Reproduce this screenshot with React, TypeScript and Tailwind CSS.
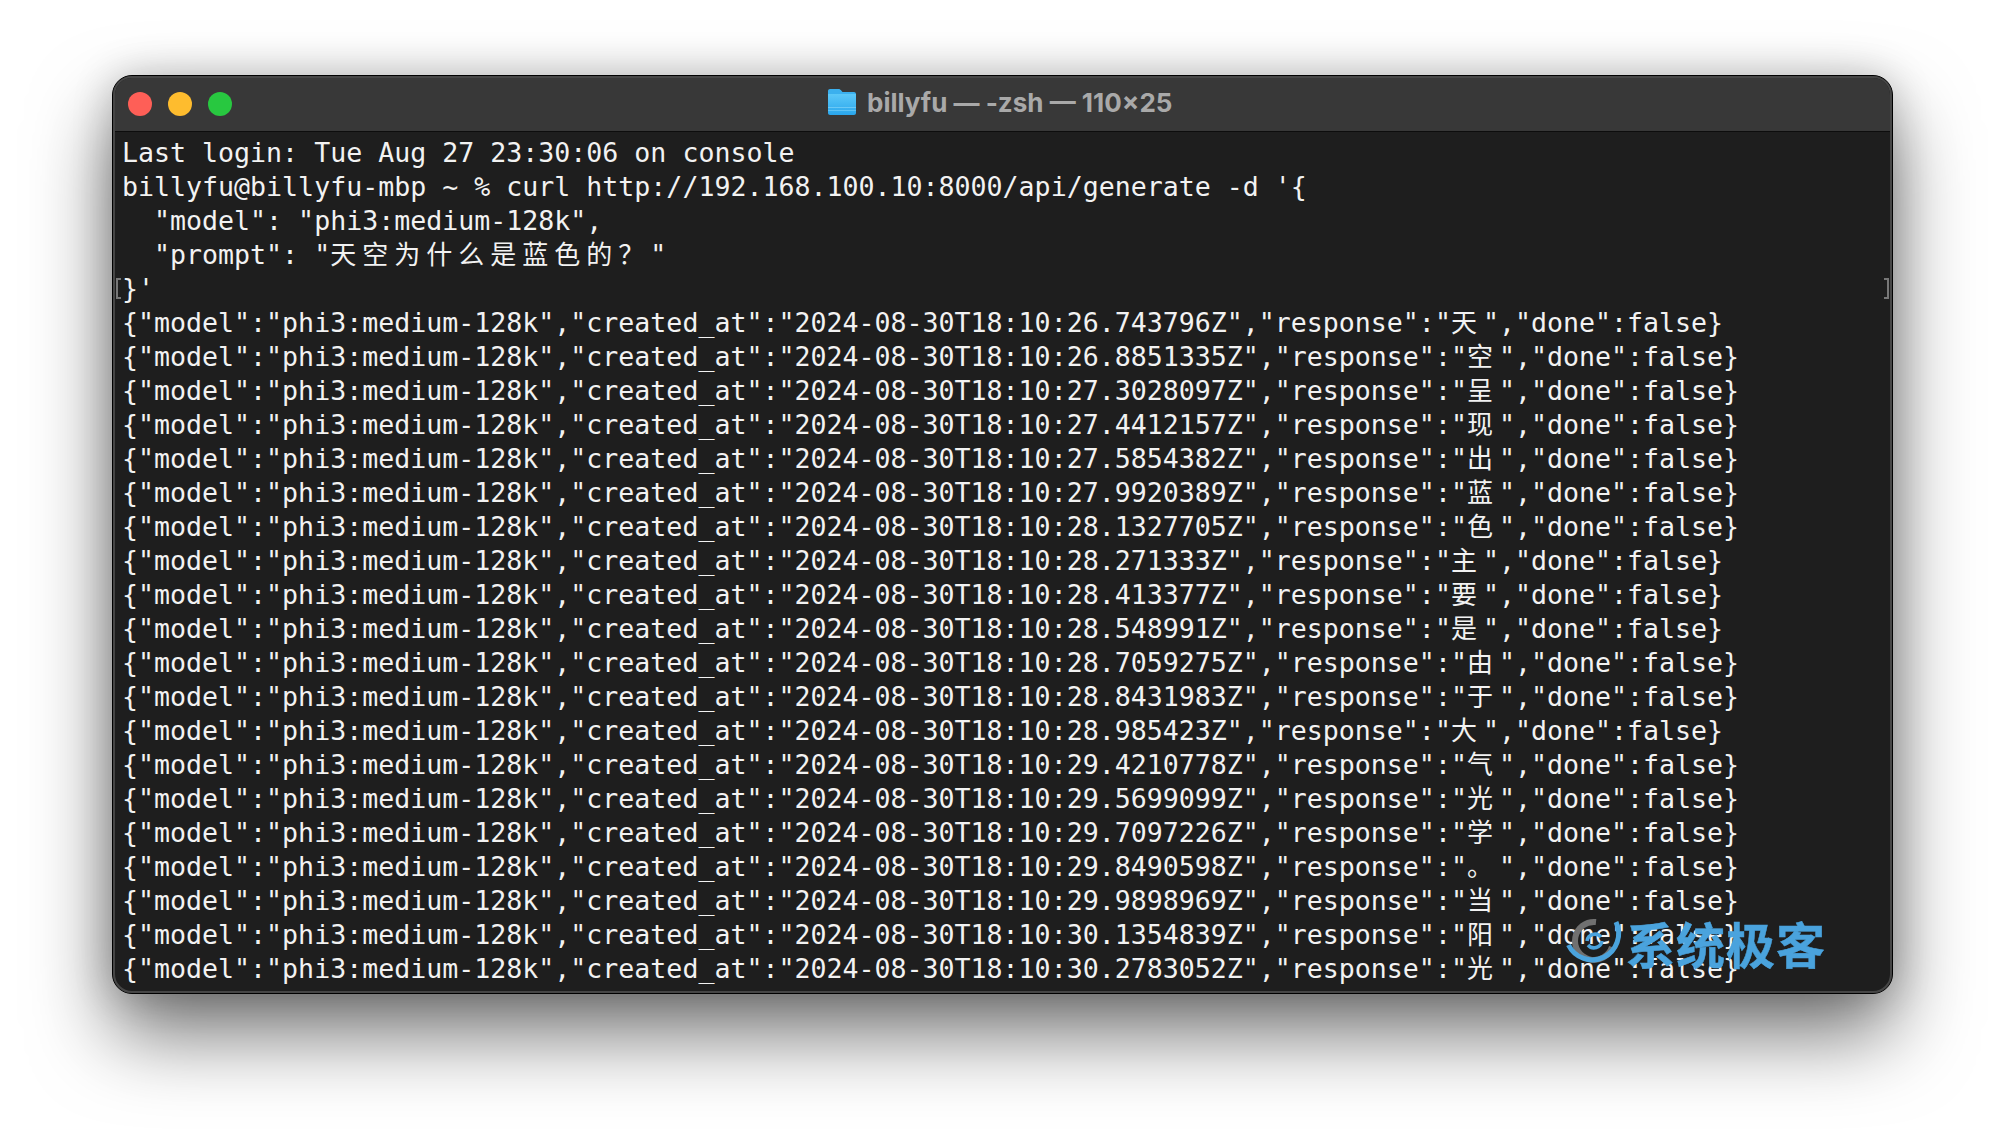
import React from 'react';

const mono = 'font-["DejaVu_Sans_Mono","Noto_Sans_CJK_SC",monospace]';

const responses: [string, string][] = [
    ['26.743796Z', '天'],
    ['26.8851335Z', '空'],
    ['27.3028097Z', '呈'],
    ['27.4412157Z', '现'],
    ['27.5854382Z', '出'],
    ['27.9920389Z', '蓝'],
    ['28.1327705Z', '色'],
    ['28.271333Z', '主'],
    ['28.413377Z', '要'],
    ['28.548991Z', '是'],
    ['28.7059275Z', '由'],
    ['28.8431983Z', '于'],
    ['28.985423Z', '大'],
    ['29.4210778Z', '气'],
    ['29.5699099Z', '光'],
    ['29.7097226Z', '学'],
    ['29.8490598Z', '。'],
    ['29.9898969Z', '当'],
    ['30.1354839Z', '阳'],
    ['30.2783052Z', '光'],
];

// CJK glyphs take two terminal cells
const Line = ({ text }: { text: string }) => (
    <div className="h-[34px] whitespace-pre leading-[34px]">
        {text.split(/([\u3000-\u9fff\uff00-\uffef])/).map((part, i) =>
            i % 2 === 1 ? (
                <span key={i} className="inline-block w-[32px] text-left text-[26px] leading-none font-['Noto_Sans_CJK_SC',sans-serif]">
                    {part}
                </span>
            ) : (
                <span key={i}>{part}</span>
            )
        )}
    </div>
);

const FolderIcon = () => (
    <svg width="28" height="26" viewBox="0 0 28 26">
        <defs>
            <linearGradient id="folderFront" x1="0" y1="0" x2="0" y2="1">
                <stop offset="0" stopColor="#5cc8f8" />
                <stop offset="1" stopColor="#2aa6ec" />
            </linearGradient>
        </defs>
        <path d="M2 0h8.500c1 0 1.600.4 2.300 1.100L14.500 3H26c1.100 0 2 .9 2 2v3H0V2C0 .9.9 0 2 0z" fill="#3bb0ee" />
        <path d="M0 5h28v19c0 1.100-.9 2-2 2H2c-1.100 0-2-.9-2-2z" fill="url(#folderFront)" />
        <rect y="18" width="28" height="1" fill="#8ad8fa" opacity="0.6" />
        <rect y="21" width="28" height="1" fill="#8ad8fa" opacity="0.5" />
    </svg>
);

const Watermark = () => (
    <div className="absolute left-[1550px] top-[905px] flex items-center text-[#4aa3dd]">
        <svg width="76" height="70" viewBox="0 0 76 70">
            <path d="M46 17A19 19 0 1 0 62 42" fill="none" stroke="#707070" strokeWidth="6" />
            <path d="M66 17A26 26 0 1 1 18.500 40" fill="none" stroke="#4aa3dd" strokeWidth="5" />
            <path d="M37 36a8 8 0 0 1 14-4M52 36a8 8 0 0 1-14 4" fill="none" stroke="#4aa3dd" strokeWidth="3.500" />
        </svg>
        <span className="mt-[4px] text-[49px] font-bold leading-none tracking-[1px] [-webkit-text-stroke:0.5px_#4aa3dd] font-['Noto_Sans_CJK_SC',sans-serif]">系统极客</span>
    </div>
);

export default function App() {
    return (
        <div className="relative h-[1142px] w-[2004px] overflow-hidden bg-white pl-[112px] pt-[75px]">
            <div className="h-[919px] w-[1781px] rounded-[20px] border border-black bg-[#1e1e1e] shadow-[0_40px_80px_rgba(0,0,0,0.55),0_0_40px_rgba(0,0,0,0.2)]">
                <div className="relative h-full overflow-hidden rounded-[19px] border-2 border-[#464646]">
                    <div className="flex h-[54px] items-center border-b border-[#0d0d0d] bg-[#383838] pb-[1px] pl-[13px]">
                        <div className="flex gap-[16px]">
                            <div className="h-[24px] w-[24px] rounded-full bg-[#fe5f57]" />
                            <div className="h-[24px] w-[24px] rounded-full bg-[#febc2e]" />
                            <div className="h-[24px] w-[24px] rounded-full bg-[#28c840]" />
                        </div>
                        <div className="mb-[4px] ml-[596px] flex items-center gap-[11px]">
                            <FolderIcon />
                            <span className="text-[26px] font-bold text-[#a9a9a9] font-['Inter',sans-serif]">billyfu — -zsh — 110×25</span>
                        </div>
                    </div>
                    <div className={`pl-[7px] pt-[4px] text-[26.6px] text-[#f2f2f2] ${mono}`}>
                        <Line text="Last login: Tue Aug 27 23:30:06 on console" />
                        <Line text="billyfu@billyfu-mbp ~ % curl http://192.168.100.10:8000/api/generate -d '{" />
                        <Line text={'  "model": "phi3:medium-128k",'} />
                        <Line text={'  "prompt": "天空为什么是蓝色的？"'} />
                        <Line text="}'" />
                        {responses.map(([time, ch]) => (
                            <Line
                                key={time}
                                text={`{"model":"phi3:medium-128k","created_at":"2024-08-30T18:10:${time}","response":"${ch}","done":false}`}
                            />
                        ))}
                    </div>
                    {/* scrollback marks around the prompt line */}
                    <div className="absolute left-[1px] top-[200px] h-[21px] w-[5px] border-y-2 border-l-2 border-[#777777]" />
                    <div className="absolute right-[1px] top-[200px] h-[21px] w-[5px] border-y-2 border-r-2 border-[#777777]" />
                </div>
            </div>
            <Watermark />
        </div>
    );
}
